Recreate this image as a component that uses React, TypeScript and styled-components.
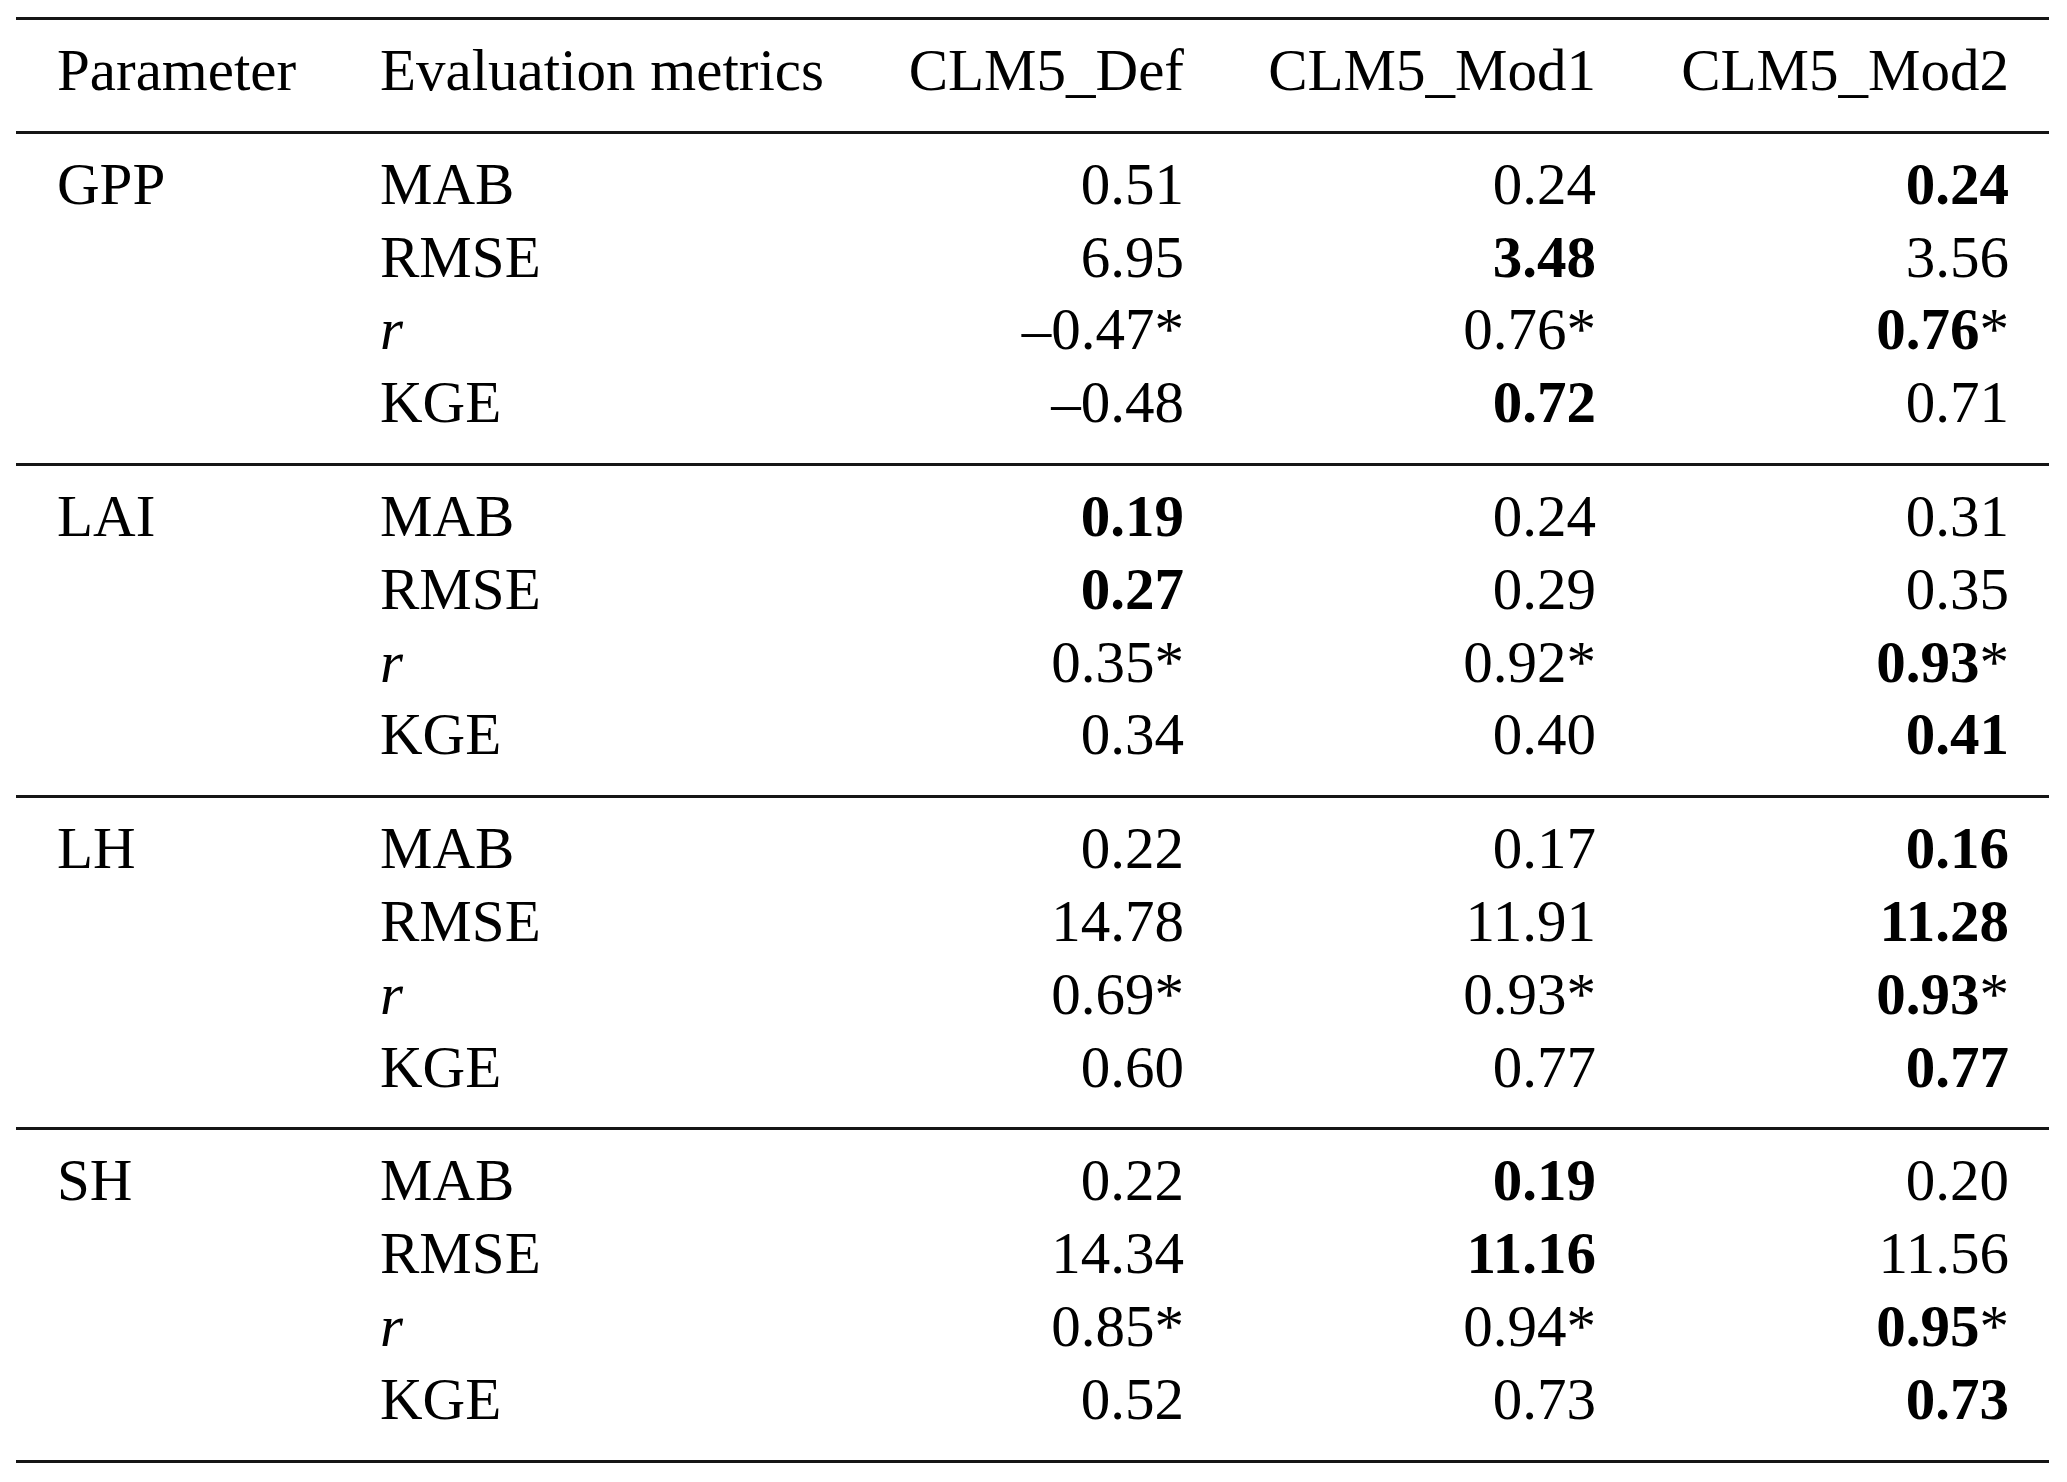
import React from 'react';
import styled, { createGlobalStyle } from 'styled-components';

type Cell = { v: string; bold?: boolean; star?: boolean };
type Metric = { name: string; italic?: boolean; cells: Cell[] };
type Group = { param: string; metrics: Metric[] };

const c = (v: string, bold = false): Cell => {
  const star = v.endsWith('*');
  return { v: star ? v.slice(0, -1) : v, bold, star };
};

const groups: Group[] = [
  {
    param: 'GPP',
    metrics: [
      { name: 'MAB', cells: [c('0.51'), c('0.24'), c('0.24', true)] },
      { name: 'RMSE', cells: [c('6.95'), c('3.48', true), c('3.56')] },
      { name: 'r', italic: true, cells: [c('–0.47*'), c('0.76*'), c('0.76*', true)] },
      { name: 'KGE', cells: [c('–0.48'), c('0.72', true), c('0.71')] },
    ],
  },
  {
    param: 'LAI',
    metrics: [
      { name: 'MAB', cells: [c('0.19', true), c('0.24'), c('0.31')] },
      { name: 'RMSE', cells: [c('0.27', true), c('0.29'), c('0.35')] },
      { name: 'r', italic: true, cells: [c('0.35*'), c('0.92*'), c('0.93*', true)] },
      { name: 'KGE', cells: [c('0.34'), c('0.40'), c('0.41', true)] },
    ],
  },
  {
    param: 'LH',
    metrics: [
      { name: 'MAB', cells: [c('0.22'), c('0.17'), c('0.16', true)] },
      { name: 'RMSE', cells: [c('14.78'), c('11.91'), c('11.28', true)] },
      { name: 'r', italic: true, cells: [c('0.69*'), c('0.93*'), c('0.93*', true)] },
      { name: 'KGE', cells: [c('0.60'), c('0.77'), c('0.77', true)] },
    ],
  },
  {
    param: 'SH',
    metrics: [
      { name: 'MAB', cells: [c('0.22'), c('0.19', true), c('0.20')] },
      { name: 'RMSE', cells: [c('14.34'), c('11.16', true), c('11.56')] },
      { name: 'r', italic: true, cells: [c('0.85*'), c('0.94*'), c('0.95*', true)] },
      { name: 'KGE', cells: [c('0.52'), c('0.73'), c('0.73', true)] },
    ],
  },
];

const headers = ['CLM5_Def', 'CLM5_Mod1', 'CLM5_Mod2'];

export default function App() {
  return (
    <>
      <GlobalStyle />
      <Table>
        <Head>
          <Row>
            <Text>Parameter</Text>
            <Text>Evaluation metrics</Text>
            {headers.map((h) => (
              <Num key={h}>{h}</Num>
            ))}
          </Row>
        </Head>
        {groups.map((g) => (
          <Section key={g.param}>
            {g.metrics.map((m, i) => (
              <Row key={m.name}>
                <Text>{i === 0 ? g.param : ''}</Text>
                <Text $italic={m.italic}>{m.name}</Text>
                {m.cells.map((cell, j) => (
                  <Num key={j}>
                    <Value $bold={cell.bold}>{cell.v}</Value>
                    {cell.star && '*'}
                  </Num>
                ))}
              </Row>
            ))}
          </Section>
        ))}
      </Table>
    </>
  );
}

const GlobalStyle = createGlobalStyle`
  body {
    margin: 0;
    background: #fff;
    color: #000;
    font-family: "Liberation Serif", "Times New Roman", serif;
  }
`;

const Table = styled.div`
  width: 2033px;
  margin: 17px 0 0 16px;
  border-bottom: 3px solid #151515;
  font-size: 59px;
  line-height: 72.8px;
`;

const Head = styled.div`
  border-top: 3px solid #151515;
  padding: 14px 40px 24px 41px;
`;

const Section = styled.div`
  border-top: 3px solid #151515;
  padding: 14px 40px 24px 41px;
`;

const Row = styled.div`
  display: grid;
  grid-template-columns: 323px 480px 324px 412px 413px;
  white-space: nowrap;
`;

const Text = styled.div<{ $italic?: boolean }>`
  font-style: ${(p) => (p.$italic ? 'italic' : 'normal')};
`;

const Num = styled.div`
  text-align: right;
`;

const Value = styled.span<{ $bold?: boolean }>`
  font-weight: ${(p) => (p.$bold ? 700 : 400)};
`;
